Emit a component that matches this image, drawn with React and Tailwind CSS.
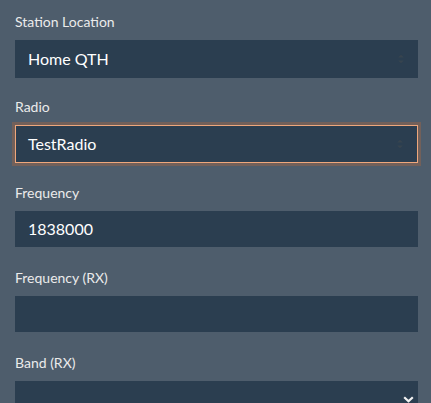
import React from "react";

function UpDown() {
  return (
    <svg width="8" height="11" viewBox="0 0 8 11" className="absolute right-[13px] top-1/2 -translate-y-1/2">
      <path d="M1 4 L4 1.2 L7 4 Z" fill="#37444f" />
      <path d="M1 7 L4 9.8 L7 7 Z" fill="#37444f" />
    </svg>
  );
}

function Chevron() {
  return (
    <svg width="11" height="7" viewBox="0 0 11 7" className="absolute right-[4px] top-[15px]">
      <path d="M1.2 1.2 L5.5 5.3 L9.8 1.2" fill="none" stroke="#f2f2f2" strokeWidth="2.2" />
    </svg>
  );
}

function Label({ children }) {
  return (
    <div className="h-[21px] mb-[8px] text-[14px] leading-[21px] text-[#ebebeb]">{children}</div>
  );
}

export default function App() {
  return (
    <div
      className="w-[431px] h-[403px] overflow-hidden bg-[#4e5d6c] pt-[11px] pl-[15px] pr-[13px]"
      style={{ fontFamily: "Lato, 'Noto Sans', sans-serif" }}
    >
      <div className="mb-[18px]">
        <Label>Station Location</Label>
        <div className="relative h-[38px] bg-[#2b3e50] px-[13px] flex items-center text-[16px] text-white">
          Home QTH
          <UpDown />
        </div>
      </div>
      <div className="mb-[19px]">
        <Label>Radio</Label>
        <div className="relative h-[38px] bg-[#2b3e50] border border-[#eea77c] shadow-[0_0_0_3px_#72605a] px-[12px] flex items-center text-[16px] text-white">
          TestRadio
          <UpDown />
        </div>
      </div>
      <div className="mb-[20px]">
        <Label>Frequency</Label>
        <div className="h-[36px] bg-[#2b3e50] px-[13px] flex items-center text-[16px] text-white">1838000</div>
      </div>
      <div className="mb-[20px]">
        <Label>Frequency (RX)</Label>
        <div className="h-[36px] bg-[#2b3e50]"></div>
      </div>
      <div>
        <Label>Band (RX)</Label>
        <div className="relative h-[38px] bg-[#2b3e50]">
          <Chevron />
        </div>
      </div>
    </div>
  );
}
